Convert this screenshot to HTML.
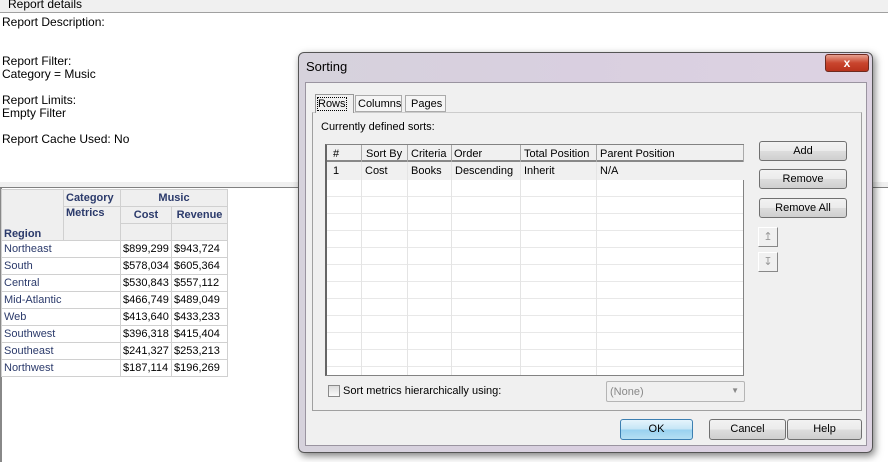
<!DOCTYPE html>
<html><head><meta charset="utf-8"><style>
*{margin:0;padding:0;box-sizing:border-box}
body{width:888px;height:462px;overflow:hidden;background:#fff;font-family:"Liberation Sans",Arial,sans-serif;font-size:11px;color:#000;position:relative}
.a{position:absolute;white-space:nowrap}
.g td{border:1px solid #d0d0d0;height:17px;padding:0 2px;font-size:11px;color:#2b3a6b}
.btn{position:absolute;border:1px solid #707070;border-radius:3px;background:linear-gradient(#f2f2f2,#ebebeb 50%,#dddddd 51%,#cfcfcf);text-align:center;font-size:11px;line-height:18px}
.lh{position:absolute;top:0;height:17px;border-right:1px solid #aaa;padding-left:6px;line-height:18px;font-size:11px}
.d{font-size:11px}
</style></head><body>
<div class="a" style="left:0;top:0;width:888px;height:13px;background:#f0f0f0;border-bottom:1px solid #a0a0a0"></div>
<div class="a" style="left:8px;top:-3px;font-size:12px">Report details</div>
<div class="a" style="left:2px;top:16px;font-size:12px;line-height:13px">Report Description:<br><br><br>Report Filter:<br>Category = Music<br><br>Report Limits:<br>Empty Filter<br><br>Report Cache Used: No</div>
<div class="a" style="left:0;top:182px;width:888px;height:6px;background:#f0f0f0;border-bottom:1px solid #808080"></div>
<div class="a" style="left:0;top:188px;width:2px;height:274px;background:#888"></div>
<table class="g a" style="left:1px;top:189px;border-collapse:collapse;width:227px">
<tr><td rowspan="3" style="width:62px;background:#efefef;vertical-align:bottom;font-weight:bold">Region</td><td style="width:57px;background:#efefef;font-weight:bold">Category</td><td colspan="2" style="background:#efefef;font-weight:bold;text-align:center">Music</td></tr>
<tr><td rowspan="2" style="background:#efefef;font-weight:bold;vertical-align:top">Metrics</td><td style="width:51px;background:#efefef;font-weight:bold;text-align:center">Cost</td><td style="background:#efefef;font-weight:bold;text-align:center">Revenue</td></tr>
<tr><td style="background:#efefef"></td><td style="background:#efefef"></td></tr>
<tr><td colspan="2">Northeast</td><td style="color:#000">$899,299</td><td style="color:#000">$943,724</td></tr>
<tr><td colspan="2">South</td><td style="color:#000">$578,034</td><td style="color:#000">$605,364</td></tr>
<tr><td colspan="2">Central</td><td style="color:#000">$530,843</td><td style="color:#000">$557,112</td></tr>
<tr><td colspan="2">Mid-Atlantic</td><td style="color:#000">$466,749</td><td style="color:#000">$489,049</td></tr>
<tr><td colspan="2">Web</td><td style="color:#000">$413,640</td><td style="color:#000">$433,233</td></tr>
<tr><td colspan="2">Southwest</td><td style="color:#000">$396,318</td><td style="color:#000">$415,404</td></tr>
<tr><td colspan="2">Southeast</td><td style="color:#000">$241,327</td><td style="color:#000">$253,213</td></tr>
<tr><td colspan="2">Northwest</td><td style="color:#000">$187,114</td><td style="color:#000">$196,269</td></tr>
</table>

<div class="a" style="left:298px;top:52px;width:575px;height:401px;border:1px solid #555;border-radius:6px;background:linear-gradient(90deg,#d6d2dc,#d9cfe0 50%,#ddd3e2);box-shadow:2px 3px 8px rgba(0,0,0,.5)"></div>
<div class="a" style="left:306px;top:59px;font-size:13px">Sorting</div>
<div class="a" style="left:825px;top:54px;width:44px;height:18px;border:1px solid #6e2a20;border-radius:3px;background:linear-gradient(#e8a08f,#c9452e 50%,#b8321c);color:#fff;font-weight:bold;text-align:center;line-height:16px;font-size:12px">x</div>
<div class="a" style="left:305px;top:82px;width:562px;height:364px;background:#f0f0f0;border:1px solid #9a94a0"></div>
<div class="a" style="left:312px;top:112px;width:550px;height:299px;border:1px solid #a0a0a0;border-top-color:#ccc;background:#f0f0f0"></div>
<div class="a d" style="left:315px;top:94px;width:39px;height:19px;border:1px solid #999;border-bottom:none;background:#f0f0f0;padding:3px 2px"><span style="outline:1px dotted #000">Rows</span></div>
<div class="a d" style="left:355px;top:95px;width:47px;height:17px;border:1px solid #aaa;background:#f5f5f5;padding:2px 2px">Columns</div>
<div class="a d" style="left:405px;top:95px;width:41px;height:17px;border:1px solid #aaa;background:#f5f5f5;padding:2px 5px">Pages</div>
<div class="a d" style="left:321px;top:121px">Currently defined sorts:</div>
<div class="a" style="left:325px;top:144px;width:419px;height:232px;border:1px solid #828282;border-left:2px solid #666;background:#fff;
background-image:repeating-linear-gradient(#fff 0 16px,#e8e8e8 16px 17px);background-position:0 35px">
<div class="a" style="left:0;top:0;width:417px;height:17px;background:#f0f0f0;border-bottom:2px solid #888"></div>
<div class="a" style="left:0;top:17px;width:417px;height:18px;background:#f0f0f0"></div>
<div class="a" style="left:34px;top:0;width:1px;height:230px;background:#e4e4e4"></div>
<div class="a" style="left:80px;top:0;width:1px;height:230px;background:#e4e4e4"></div>
<div class="a" style="left:124px;top:0;width:1px;height:230px;background:#e4e4e4"></div>
<div class="a" style="left:193px;top:0;width:1px;height:230px;background:#e4e4e4"></div>
<div class="a" style="left:269px;top:0;width:1px;height:230px;background:#e4e4e4"></div>
<div class="lh" style="left:0;width:35px">#</div>
<div class="lh" style="left:34px;width:47px;padding-left:5px">Sort By</div>
<div class="lh" style="left:80px;width:45px;padding-left:4px">Criteria</div>
<div class="lh" style="left:124px;width:70px;padding-left:3px">Order</div>
<div class="lh" style="left:193px;width:77px;padding-left:4px">Total Position</div>
<div class="lh" style="left:269px;width:148px;padding-left:4px">Parent Position</div>
<div class="a d" style="left:6px;top:20px">1</div>
<div class="a d" style="left:38px;top:20px">Cost</div>
<div class="a d" style="left:84px;top:20px">Books</div>
<div class="a d" style="left:128px;top:20px">Descending</div>
<div class="a d" style="left:197px;top:20px">Inherit</div>
<div class="a d" style="left:273px;top:20px">N/A</div>
</div>
<div class="btn" style="left:759px;top:141px;width:88px;height:20px">Add</div>
<div class="btn" style="left:759px;top:169px;width:88px;height:20px">Remove</div>
<div class="btn" style="left:759px;top:198px;width:88px;height:20px">Remove All</div>
<div class="a" style="left:758px;top:227px;width:20px;height:20px;border:1px solid;border-color:#fff #888 #888 #fff;color:#999;text-align:center;font-size:11px;line-height:18px">↥</div>
<div class="a" style="left:758px;top:252px;width:20px;height:20px;border:1px solid;border-color:#fff #888 #888 #fff;color:#999;text-align:center;font-size:11px;line-height:18px">↧</div>
<div class="a" style="left:328px;top:385px;width:12px;height:12px;border:1px solid #8a8a8a;background:linear-gradient(#ddd,#fafafa)"></div>
<div class="a d" style="left:343px;top:385px">Sort metrics hierarchically using:</div>
<div class="a d" style="left:606px;top:381px;width:139px;height:21px;border:1px solid #b5b5b5;border-radius:2px;background:#f0f0f0;color:#888;padding:4px 3px">(None)<span style="position:absolute;right:5px;top:4px;font-size:8px">▼</span></div>
<div class="btn" style="left:620px;top:419px;width:73px;height:21px;border-color:#3c7fb1;background:linear-gradient(#e5f4fc,#c4e5f6 50%,#98d1ef 51%,#b5dff3)">OK</div>
<div class="btn" style="left:709px;top:419px;width:77px;height:21px">Cancel</div>
<div class="btn" style="left:787px;top:419px;width:75px;height:21px">Help</div>
</body></html>
